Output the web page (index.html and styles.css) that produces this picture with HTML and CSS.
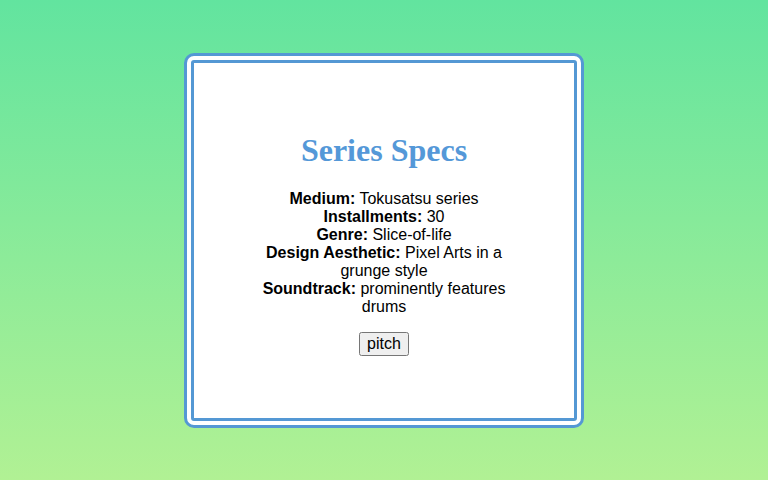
FILE: index.html
```html
<!DOCTYPE html>
<html lang="en">
<head>
    <meta charset="UTF-8">
    <meta name="viewport" content="width=device-width, initial-scale=1.0">
    <title>Series Specs</title>
    <link rel="stylesheet" href="styles.css">
</head>
<body>
    <main class="card">
        <h1 class="title">Series Specs</h1>
        <div class="specs">
            <div><b>Medium:</b> Tokusatsu series</div>
            <div><b>Installments:</b> 30</div>
            <div><b>Genre:</b> Slice-of-life</div>
            <div><b>Design Aesthetic:</b> Pixel Arts in a grunge style</div>
            <div><b>Soundtrack:</b> prominently features drums</div>
        </div>
        <button type="button" class="pitch-button">pitch</button>
    </main>
</body>
</html>
```

FILE: styles.css
```css
* {
    box-sizing: border-box;
}

body {
    margin: 0;
    min-height: 100vh;
    display: flex;
    align-items: center;
    justify-content: center;
    font-family: "Liberation Sans", Arial, sans-serif;
    font-size: 16px;
    line-height: 18px;
    color: #000;
    background: linear-gradient(to bottom, #62e49f, #b1f194);
}

.card {
    display: flex;
    flex-direction: column;
    align-items: center;
    width: 100%;
    max-width: 400px;
    padding: 68px 60px 62px;
    text-align: center;
    background: #fff;
    border: 10px double #5498d4;
    border-radius: 10px;
}

.title {
    margin: 0 0 21px;
    font-family: "Liberation Serif", "Times New Roman", serif;
    font-size: 32px;
    line-height: 38px;
    color: #5498d8;
}

.pitch-button {
    margin: 16px 0 0;
    padding: 1px 6px;
    font: inherit;
}
```
